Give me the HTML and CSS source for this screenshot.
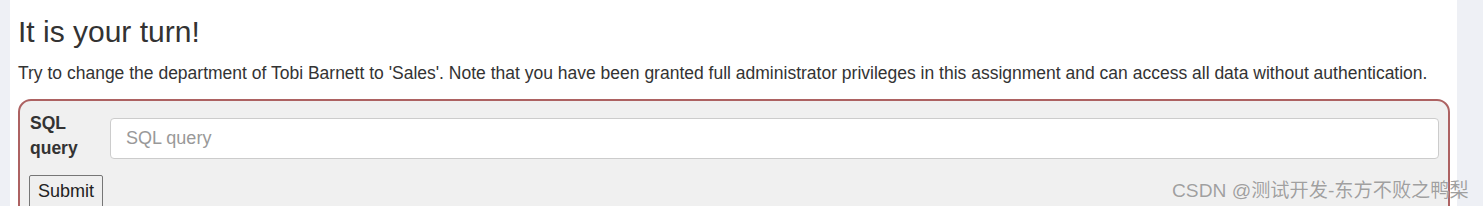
FILE: index.html
```html
<!doctype html>
<html>
<head>
	<title>SQL Injection</title>
	<meta charset="utf-8">
	<link rel="stylesheet" href="styles.css">
</head>
<body>

	<div class="page">
		<h2>It is your turn!</h2>
		<p>Try to change the department of Tobi Barnett to 'Sales'. Note that you have been granted full administrator privileges in this assignment and can access all data without authentication.</p>

		<form class="attack" onsubmit="return false;">
			<div class="row">
				<label for="query">SQL query</label>
				<input type="text" id="query" placeholder="SQL query" />
			</div>
			<button type="submit">Submit</button>
		</form>
	</div>

	<span class="mark">CSDN @测试开发-东方不败之鸭梨</span>

</body>
</html>
```

FILE: styles.css
```css
* {
	box-sizing: border-box;
}
body {
	margin: 0;
	background: #eef0f5;
	color: #333;
	font: 16px/1.5 "Liberation Sans", Arial, sans-serif;
	overflow: hidden;
}
.page {
	width: 1447px;
	height: 206px;
	margin-left: 10px;
	padding: 0 8px;
	background: #fff;
	overflow: hidden;
}
h2 {
	margin: 0;
	padding-top: 14px;
	font-size: 30px;
	font-weight: normal;
	line-height: 36px;
}
p {
	margin: 11px 0 0;
	font-size: 17.5px;
	line-height: 24px;
}
.attack {
	width: 1432px;
	margin-top: 14px;
	padding: 9px 9px 20px 10px;
	border: 2px solid #ad6262;
	border-radius: 13px;
	background: #f0f0f0;
}
.row {
	display: flex;
	align-items: flex-start;
}
label {
	width: 80px;
	font-size: 17.5px;
	font-weight: bold;
	line-height: 25px;
	padding-top: 1px;
}
input[type="text"] {
	flex: 1;
	height: 41px;
	margin-top: 8px;
	padding: 0 15px;
	border: 1px solid #ccc;
	border-radius: 4px;
	background: #fff;
	font: 18px "Liberation Sans", Arial, sans-serif;
	color: #555;
	outline: none;
}
input::placeholder {
	color: #999;
}
button {
	margin: 14px 0 0 -1px;
	padding: 3px 8px 4px;
	border: 1px solid #767676;
	border-radius: 2px;
	background: #efefef;
	color: #222;
	font: 18px "Liberation Sans", Arial, sans-serif;
	line-height: 24px;
}
.mark {
	position: absolute;
	left: 1172px;
	top: 175px;
	color: #a0a0a0;
	font: 19.2px "Liberation Sans", "Noto Sans CJK SC", sans-serif;
	text-shadow: 0 0 1px #fff;
}
```
